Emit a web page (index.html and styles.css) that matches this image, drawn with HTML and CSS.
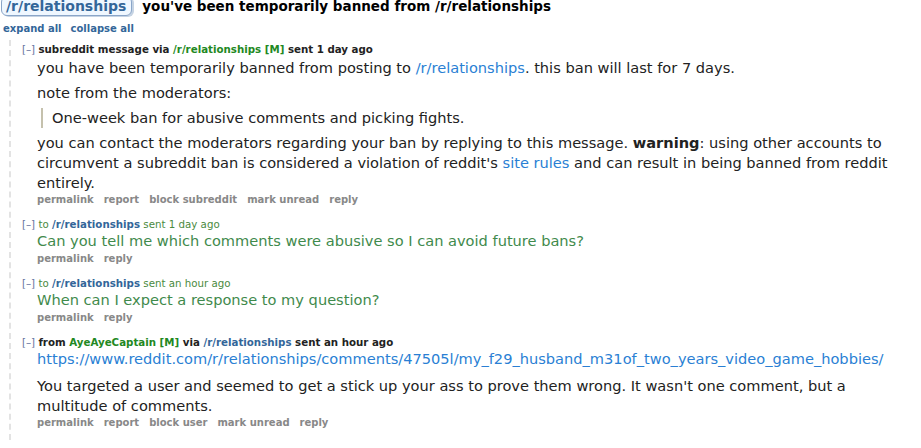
FILE: index.html
```html
<!DOCTYPE html>
<html>
<head>
<meta charset="utf-8">
<link rel="stylesheet" href="styles.css">
</head>
<body>
<div class="page">
  <div class="titlebar">
    <span class="pill">/r/relationships</span>
    <span class="title">you've been temporarily banned from /r/relationships</span>
  </div>
  <div class="toggles"><a>expand all</a><a>collapse all</a></div>
  <div class="thread">
    <div class="msg first">
      <div class="head"><span class="exp">[–]</span> <b>subreddit message via <span class="grn">/r/relationships</span> <span class="grn">[M]</span> sent 1 day ago</b></div>
      <div class="md">
        <p>you have been temporarily banned from posting to <a>/r/relationships</a>. this ban will last for 7 days.</p>
        <p>note from the moderators:</p>
        <blockquote><p>One-week ban for abusive comments and picking fights.</p></blockquote>
        <p>you can contact the moderators regarding your ban by replying to this message. <strong>warning</strong>: using other accounts to circumvent a subreddit ban is considered a violation of reddit's <a>site rules</a> and can result in being banned from reddit entirely.</p>
      </div>
      <ul class="buttons"><li>permalink</li><li>report</li><li>block subreddit</li><li>mark unread</li><li>reply</li></ul>
    </div>
    <div class="msg sent">
      <div class="head"><span class="exp">[–]</span> <span class="to">to</span> <b class="sr">/r/relationships</b> <span class="to">sent 1 day ago</span></div>
      <div class="md"><p>Can you tell me which comments were abusive so I can avoid future bans?</p></div>
      <ul class="buttons"><li>permalink</li><li>reply</li></ul>
    </div>
    <div class="msg sent">
      <div class="head"><span class="exp">[–]</span> <span class="to">to</span> <b class="sr">/r/relationships</b> <span class="to">sent an hour ago</span></div>
      <div class="md"><p>When can I expect a response to my question?</p></div>
      <ul class="buttons"><li>permalink</li><li>reply</li></ul>
    </div>
    <div class="msg">
      <div class="head"><span class="exp">[–]</span> <b>from <span class="grn">AyeAyeCaptain</span> <span class="grn">[M]</span> via <span class="sr">/r/relationships</span> sent an hour ago</b></div>
      <div class="md">
        <p class="urlp"><a>https://www.reddit.com/r/relationships/comments/47505l/my_f29_husband_m31of_two_years_video_game_hobbies/</a></p>
        <p>You targeted a user and seemed to get a stick up your ass to prove them wrong. It wasn't one comment, but a multitude of comments.</p>
      </div>
      <ul class="buttons"><li>permalink</li><li>report</li><li>block user</li><li>mark unread</li><li>reply</li></ul>
    </div>
  </div>
</div>
</body>
</html>
```

FILE: styles.css
```css
* { box-sizing: border-box; }
body {
  margin: 0;
  background: #fff;
  font-family: "DejaVu Sans", Verdana, sans-serif;
  color: #222;
  overflow: hidden;
}
.page { width: 921px; height: 448px; }
.titlebar {
  display: flex;
  align-items: center;
  margin-top: -4px;
  height: 20px;
}
.pill {
  font-weight: bold;
  font-size: 14px;
  color: #336699;
  background: #eff7ff;
  border: 1px solid #8aa5c8;
  border-radius: 6px;
  box-shadow: 2px 1px 0 #c5d3e3;
  padding: 1px 5px 1px 4px;
  margin-left: 1px;
  line-height: 16px;
}
.title {
  font-weight: bold;
  font-size: 13.5px;
  margin-left: 10px;
  color: #000;
}
.toggles {
  display: flex;
  gap: 9px;
  padding: 6px 0 0 3px;
  font-size: 10px;
  font-weight: bold;
  color: #336699;
  line-height: 14px;
}
.thread {
  margin: 4px 0 0 9px;
  border-left: 2px dashed #e3e3e3;
  padding: 2px 0 10px 11px;
}
.msg { margin-bottom: 10px; }
.head {
  font-size: 10.25px;
  line-height: 14px;
  color: #222;
}
.first .md { margin-top: 2px; }
.exp { color: #6474a0; font-weight: normal; }
.grn { color: #228822; }
.sr { color: #336699; }
.to { color: #4a8a3e; }
.md {
  margin-left: 15px;
  max-width: 860px;
  font-size: 14.6px;
  line-height: 20px;
}
.md p { margin: 0 0 5px; }
.md p:last-child { margin-bottom: 0; }
.md a { color: #2a7fd4; }
.md strong { font-weight: bold; }
.md blockquote {
  margin: 0 0 5px 4px;
  padding-left: 9px;
  border-left: 2px solid #c5c1ad;
}
.md blockquote p { margin: 0; }
.sent .md { color: #3f8a4c; margin-bottom: 1px; }
.md p.urlp { margin-bottom: 7px; }
.buttons {
  list-style: none;
  margin: 0 0 0 15px;
  padding: 0;
  display: flex;
  gap: 10px;
  font-size: 10px;
  font-weight: bold;
  color: #888;
  line-height: 14px;
}
```
